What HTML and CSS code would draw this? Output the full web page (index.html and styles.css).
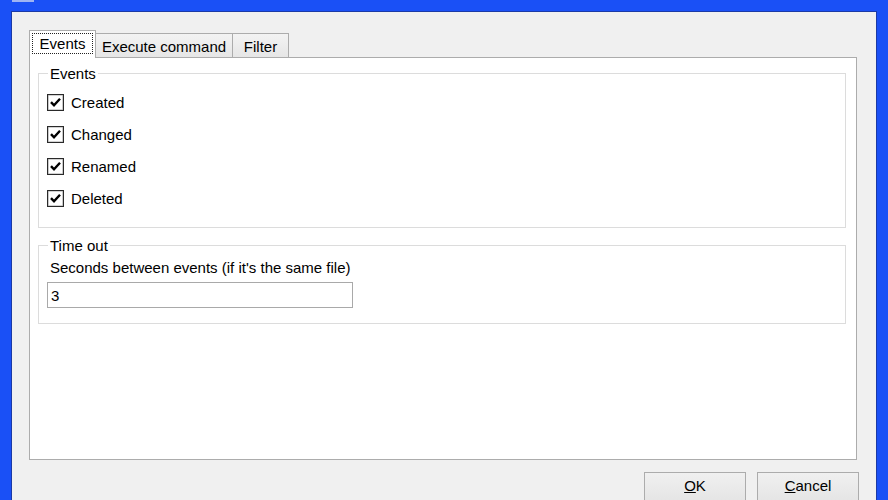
FILE: index.html
```html
<!DOCTYPE html>
<html>
<head>
<meta charset="utf-8">
<link rel="stylesheet" href="styles.css">
</head>
<body>
<div class="window">
  <div class="titlebar"><span class="app-icon"></span></div>
  <div class="client">
    <div class="tabs">
      <div class="tabstrip">
        <div class="tab tab-selected tab-events"><span class="focus">Events</span></div>
        <div class="tab tab-exec">Execute command</div>
        <div class="tab tab-filter">Filter</div>
      </div>
      <div class="page">
        <fieldset class="group group-events">
          <legend>Events</legend>
          <label class="check"><span class="box"><svg viewBox="0 0 15 15" width="15" height="15"><polyline points="3,7.2 6,10.3 12,3.8" fill="none" stroke="#000" stroke-width="2.4"/></svg></span>Created</label>
          <label class="check"><span class="box"><svg viewBox="0 0 15 15" width="15" height="15"><polyline points="3,7.2 6,10.3 12,3.8" fill="none" stroke="#000" stroke-width="2.4"/></svg></span>Changed</label>
          <label class="check"><span class="box"><svg viewBox="0 0 15 15" width="15" height="15"><polyline points="3,7.2 6,10.3 12,3.8" fill="none" stroke="#000" stroke-width="2.4"/></svg></span>Renamed</label>
          <label class="check"><span class="box"><svg viewBox="0 0 15 15" width="15" height="15"><polyline points="3,7.2 6,10.3 12,3.8" fill="none" stroke="#000" stroke-width="2.4"/></svg></span>Deleted</label>
        </fieldset>
        <fieldset class="group group-timeout">
          <legend>Time out</legend>
          <div class="field-label">Seconds between events (if it's the same file)</div>
          <input class="textbox" type="text" value="3">
        </fieldset>
      </div>
    </div>
    <div class="buttons">
      <button class="btn"><u>O</u>K</button>
      <button class="btn"><u>C</u>ancel</button>
    </div>
  </div>
</div>
</body>
</html>
```

FILE: styles.css
```css
html, body {
  margin: 0;
  padding: 0;
  overflow: hidden;
}

body {
  font-family: "Liberation Sans", Arial, sans-serif;
  font-size: 15px;
  color: #000;
}

.window {
  width: 888px;
  height: 500px;
  background: #1a50f6;
  display: flex;
  flex-direction: column;
  overflow: hidden;
}

.titlebar {
  flex: 0 0 11px;
  height: 11px;
  display: flex;
  align-items: flex-start;
  padding-left: 12px;
}

.app-icon {
  width: 22px;
  height: 2px;
  background: #9fb4f2;
}

.client {
  flex: 1 1 auto;
  min-height: 0;
  overflow: hidden;
  margin: 0 11px;
  background: #f0f0f0;
  border-top: 1px solid #1b3aa6;
  border-left: 1px solid #1b3aa6;
  border-right: 1px solid #1b3aa6;
  padding: 18px 0 0 17px;
  display: flex;
  flex-direction: column;
}

.tabs {
  flex-shrink: 0;
  margin-right: 19px;
  display: flex;
  flex-direction: column;
}

.tabstrip {
  display: flex;
  align-items: flex-end;
  position: relative;
  z-index: 1;
}

.tab {
  box-sizing: border-box;
  height: 24px;
  border: 1px solid #acacac;
  border-bottom: none;
  background: linear-gradient(#f3f3f3, #e6e6e6);
  display: flex;
  justify-content: center;
  align-items: center;
  padding-top: 2px;
  margin-left: -1px;
  white-space: nowrap;
}

.tab-selected {
  height: 28px;
  margin-left: 0;
  margin-bottom: -1px;
  background: #fff;
  padding: 2px 2px 4px;
  align-items: stretch;
  position: relative;
  z-index: 2;
}

.focus {
  flex: 1;
  border: 1px dotted #222;
  display: flex;
  align-items: center;
  justify-content: center;
}

.tab-events { width: 67px; }
.tab-exec { width: 138px; }
.tab-filter { width: 57px; }

.page {
  box-sizing: border-box;
  height: 403px;
  background: #fff;
  border: 1px solid #acacac;
  padding: 7px 10px 0 8px;
}

.group {
  margin: 0;
  padding: 4px 8px 13px;
  border: 1px solid #dcdcdc;
  min-width: 0;
}

.group legend {
  padding: 0 2px;
  margin-left: 1px;
  line-height: 17px;
  height: 17px;
}

.group-timeout {
  margin-top: 9px;
  padding-top: 0;
  padding-bottom: 15px;
}

.check {
  display: flex;
  align-items: center;
  height: 32px;
}

.box {
  box-sizing: border-box;
  width: 17px;
  height: 17px;
  border: 1px solid #2a2a2a;
  box-shadow: inset 0 0 0 0.6px rgba(0, 0, 0, 0.35);
  background: #fff;
  margin-right: 7px;
  display: flex;
  align-items: center;
  justify-content: center;
}

.box svg {
  display: block;
}

.field-label {
  margin-top: 5px;
  line-height: 18px;
  padding-left: 3px;
}

.textbox {
  display: block;
  box-sizing: border-box;
  margin-top: 5px;
  width: 306px;
  height: 26px;
  border: 1px solid #a9a9a9;
  padding: 0 3px;
  font-family: "Liberation Sans", Arial, sans-serif;
  font-size: 15px;
  color: #000;
  outline: none;
}

.buttons {
  flex-shrink: 0;
  display: flex;
  justify-content: flex-end;
  gap: 11px;
  margin-top: 12px;
  padding-right: 17px;
}

.btn {
  flex-shrink: 0;
  box-sizing: border-box;
  width: 102px;
  height: 30px;
  border: 1px solid #acacac;
  background: linear-gradient(#f0f0f0, #e5e5e5);
  font-family: "Liberation Sans", Arial, sans-serif;
  font-size: 15px;
  color: #000;
  padding: 0 0 3px;
  margin: 0;
}
```
